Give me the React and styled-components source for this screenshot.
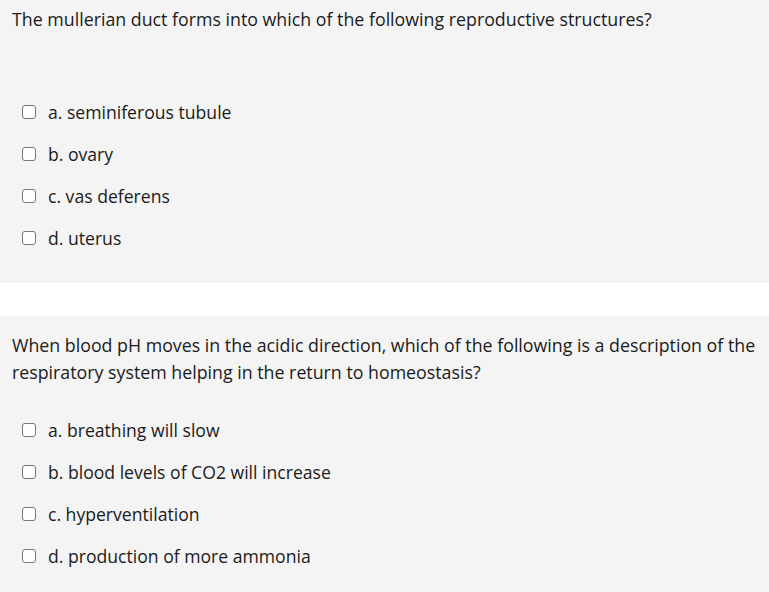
import React from "react";
import styled, { createGlobalStyle } from "styled-components";

const Global = createGlobalStyle`
  html, body { margin: 0; padding: 0; background: #ffffff; }
  body { font-family: "Open Sans", "Noto Sans", sans-serif; color: #1b1b1b; }
`;

const Page = styled.div`
  display: flex;
  flex-direction: column;
  gap: 33px;
  width: 769px;
`;

const Panel = styled.section`
  background: #f4f4f4;
  padding: ${(p) => p.$pad};
  height: ${(p) => p.$h}px;
  box-sizing: border-box;
`;

const Question = styled.p`
  margin: 0 0 ${(p) => p.$gap}px 0;
  font-size: 17.8px;
  line-height: 27px;
`;

const Options = styled.ul`
  list-style: none;
  margin: 0;
  padding: 0 0 0 10px;
  display: flex;
  flex-direction: column;
  gap: 14px;
`;

const Option = styled.li`
  display: flex;
  align-items: center;
  height: 28px;
  font-size: 17.6px;
`;

const Box = styled.span`
  width: 12px;
  height: 12px;
  border: 1px solid #767676;
  border-radius: 3px;
  background: #fff;
  margin-right: 12px;
  flex: none;
`;

const q1 = ["a. seminiferous tubule", "b. ovary", "c. vas deferens", "d. uterus"];
const q2 = [
  "a. breathing will slow",
  "b. blood levels of CO2 will increase",
  "c. hyperventilation",
  "d. production of more ammonia",
];

export default function App() {
  return (
    <>
      <Global />
      <Page>
        <Panel $pad="6px 0 0 12px" $h={283}>
          <Question $gap={65}>
            The mullerian duct forms into which of the following reproductive structures?
          </Question>
          <Options>
            {q1.map((t) => (
              <Option key={t}>
                <Box />
                {t}
              </Option>
            ))}
          </Options>
        </Panel>
        <Panel $pad="16px 0 0 12px" $h={276}>
          <Question $gap={30}>
            When blood pH moves in the acidic direction, which of the following is a description of the
            respiratory system helping in the return to homeostasis?
          </Question>
          <Options>
            {q2.map((t) => (
              <Option key={t}>
                <Box />
                {t}
              </Option>
            ))}
          </Options>
        </Panel>
      </Page>
    </>
  );
}
